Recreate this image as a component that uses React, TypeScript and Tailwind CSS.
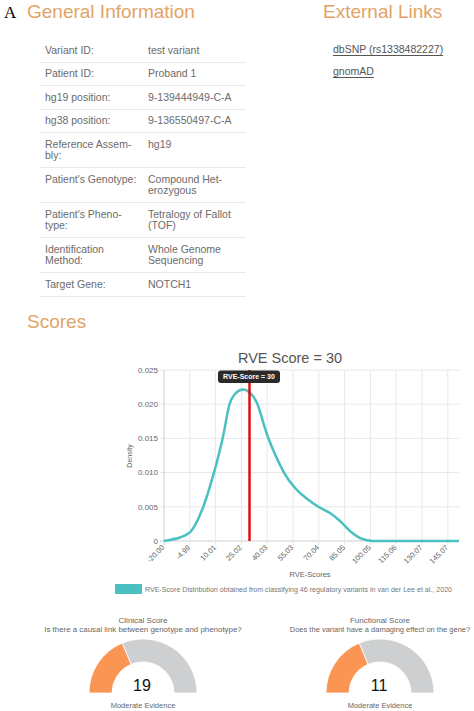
import React from 'react';

const SANS = { fontFamily: '"Liberation Sans", Arial, sans-serif' };

const rows: { label: React.ReactNode; value: React.ReactNode }[] = [
  { label: 'Variant ID:', value: 'test variant' },
  { label: 'Patient ID:', value: 'Proband 1' },
  { label: 'hg19 position:', value: '9-139444949-C-A' },
  { label: 'hg38 position:', value: '9-136550497-C-A' },
  { label: <>Reference Assem-<br />bly:</>, value: 'hg19' },
  { label: "Patient's Genotype:", value: <>Compound Het-<br />erozygous</> },
  { label: <>Patient's Pheno-<br />type:</>, value: <>Tetralogy of Fallot<br />(TOF)</> },
  { label: <>Identification<br />Method:</>, value: <>Whole Genome<br />Sequencing</> },
  { label: 'Target Gene:', value: 'NOTCH1' },
];

// plot geometry, in page coordinates
const X0 = 164;
const Y0 = 369;
const YB = 540;
const XR = 459;
const STEP = 25.8;
const xTicks = ['-20.00', '-4.99', '10.01', '25.02', '40.03', '55.03', '70.04', '85.05', '100.05', '115.06', '130.07', '145.07'];
const yTicks = ['0.025', '0.020', '0.015', '0.010', '0.005', '0'];

const curve: [number, number][] = [
  [164, 540], [180, 536.5], [192, 529], [203.3, 505.7], [214, 471.7], [222.7, 437], [229.3, 404],
  [235, 393], [242.5, 388.5], [249, 391], [257.3, 402.7], [268.3, 437], [284, 471.7], [296, 488],
  [306, 497], [318.3, 505.7], [330, 512], [340, 520], [350, 530], [360, 537], [372, 540], [400, 540], [459, 540],
];

function smooth(pts: [number, number][]) {
  let d = `M${pts[0][0]},${pts[0][1]}`;
  for (let i = 0; i < pts.length - 1; i++) {
    const p0 = pts[i - 1] || pts[i];
    const p1 = pts[i];
    const p2 = pts[i + 1];
    const p3 = pts[i + 2] || p2;
    const c1x = p1[0] + (p2[0] - p0[0]) / 6;
    const c1y = Math.min(YB, p1[1] + (p2[1] - p0[1]) / 6);
    const c2x = p2[0] - (p3[0] - p1[0]) / 6;
    const c2y = Math.min(YB, p2[1] - (p3[1] - p1[1]) / 6);
    d += ` C${c1x},${c1y} ${c2x},${c2y} ${p2[0]},${p2[1]}`;
  }
  return d;
}

function RveChart() {
  const gridY = yTicks.map((_, i) => Y0 + ((YB - Y0) / 5) * i);
  return (
    <svg width={474} height={265} viewBox="0 338 474 265" className="mt-[8.5px] block" style={SANS}>
      <text x={290} y={361.5} textAnchor="middle" fontSize={14.5} fill="#555">
        RVE Score = 30
      </text>

      {gridY.map((y, i) => (
        <g key={i}>
          <line x1={X0 - 4} x2={XR} y1={y} y2={y} stroke={i === 5 ? '#cfcfcf' : '#e8e8e8'} strokeWidth={1} />
          <text x={158} y={y + 2.8} textAnchor="end" fontSize={8} fill="#666">
            {yTicks[i]}
          </text>
        </g>
      ))}
      {xTicks.map((t, i) => {
        const x = X0 + STEP * i;
        return (
          <g key={t}>
            <line x1={x} x2={x} y1={Y0} y2={YB + 4} stroke={i === 0 ? '#cfcfcf' : '#e8e8e8'} strokeWidth={1} />
            <text
              x={x + 1}
              y={547}
              textAnchor="end"
              fontSize={7.5}
              fill="#666"
              transform={`rotate(-45 ${x + 1} 547)`}
            >
              {t}
            </text>
          </g>
        );
      })}

      <text x={310} y={576} textAnchor="middle" fontSize={7.5} fill="#666">
        RVE-Scores
      </text>
      <text x={132} y={455} textAnchor="middle" fontSize={7} fill="#666" transform="rotate(-90 132 455)">
        Density
      </text>

      <path d={smooth(curve)} fill="none" stroke="#4bc0c0" strokeWidth={2.5} strokeLinejoin="round" />

      <line x1={249.5} x2={249.5} y1={Y0} y2={YB} stroke="#e10f0f" strokeWidth={2.5} />
      <rect x={218} y={369.5} width={62} height={12.5} rx={3} fill="#2a2a2a" />
      <text x={249} y={378.3} textAnchor="middle" fontSize={7} fontWeight={700} fill="#fff">
        RVE-Score = 30
      </text>

      <rect x={115} y={583} width={27} height={10} fill="#4bc0c0" />
      <text x={145} y={590.5} fontSize={7.1} fill="#777">
        RVE-Score Distribution obtained from classifying 46 regulatory variants in van der Lee et al., 2020
      </text>
    </svg>
  );
}

function Gauge({ title, question, score, size }: { title: string; question: string; score: number; size: string }) {
  const cx = 60;
  const cy = 56;
  const R = 54;
  const r = 31;
  const a = (112.5 * Math.PI) / 180;
  const ox = cx + R * Math.cos(a);
  const oy = cy - R * Math.sin(a);
  const ix = cx + r * Math.cos(a);
  const iy = cy - r * Math.sin(a);
  const orange = `M${cx - R},${cy} A${R},${R} 0 0 1 ${ox},${oy} L${ix},${iy} A${r},${r} 0 0 0 ${cx - r},${cy} Z`;
  const gray = `M${ox},${oy} A${R},${R} 0 0 1 ${cx + R},${cy} L${cx + r},${cy} A${r},${r} 0 0 0 ${ix},${iy} Z`;
  return (
    <div className="flex flex-col items-center pt-[11.5px] text-[#666]" style={SANS}>
      <p className="text-[8px] leading-[9px]">{title}</p>
      <p className={`${size} leading-[9px] whitespace-nowrap`}>{question}</p>
      <svg width={120} height={58} viewBox="0 0 120 58" className="mt-[3.5px] block">
        <path d={orange} fill="#fa9554" stroke="#fff" strokeWidth={0.8} />
        <path d={gray} fill="#cdcfd1" stroke="#fff" strokeWidth={0.8} />
        <text x={cx - 1} y={54} textAnchor="middle" fontSize={16} fill="#111">
          {score}
        </text>
      </svg>
      <p className="mt-[6px] text-[7.5px] leading-[9px]">Moderate Evidence</p>
    </div>
  );
}

export default function App() {
  return (
    <div className="relative h-[711px] w-[474px] overflow-hidden bg-white" style={SANS}>
      <div className="flex">
        <div className="w-[300px] pl-[4px]">
          <div className="flex items-baseline pt-[2px]">
            <span
              className="w-[23px] text-[17px] leading-[19px] text-black"
              style={{ fontFamily: '"Liberation Serif", "Times New Roman", serif' }}
            >
              A
            </span>
            <h1 className="text-[19px] leading-[19px] text-[#e2a466]">General Information</h1>
          </div>
          <div className="ml-[36px] mt-[17px] w-[206px] text-[10.5px] leading-[11.5px] text-[#6b6b6b]">
            {rows.map((row, i) => (
              <div key={i} className="grid grid-cols-[103px_1fr] border-b border-[#e9e9e9] py-[5.5px]">
                <div className="pl-[5px]">{row.label}</div>
                <div className="pl-[5px]">{row.value}</div>
              </div>
            ))}
          </div>
        </div>
        <div className="pl-[23px] pt-[2px]">
          <h2 className="text-[19px] leading-[19px] text-[#e2a466]">External Links</h2>
          <div className="ml-[10px] mt-[22px] flex flex-col gap-[10px] text-[10.5px] leading-[12px] text-[#555]">
            <span className="underline underline-offset-2">dbSNP (rs1338482227)</span>
            <span className="underline underline-offset-2">gnomAD</span>
          </div>
        </div>
      </div>

      <h2 className="ml-[27px] mt-[15px] text-[19px] leading-[19px] text-[#e2a466]">Scores</h2>

      <RveChart />

      <div className="grid grid-cols-[286px_188px]">
        <Gauge
          title="Clinical Score"
          question="Is there a causal link between genotype and phenotype?"
          score={19}
          size="text-[7.9px]"
        />
        <Gauge
          title="Functional Score"
          question="Does the variant have a damaging effect on the gene?"
          score={11}
          size="text-[7.5px]"
        />
      </div>
    </div>
  );
}
